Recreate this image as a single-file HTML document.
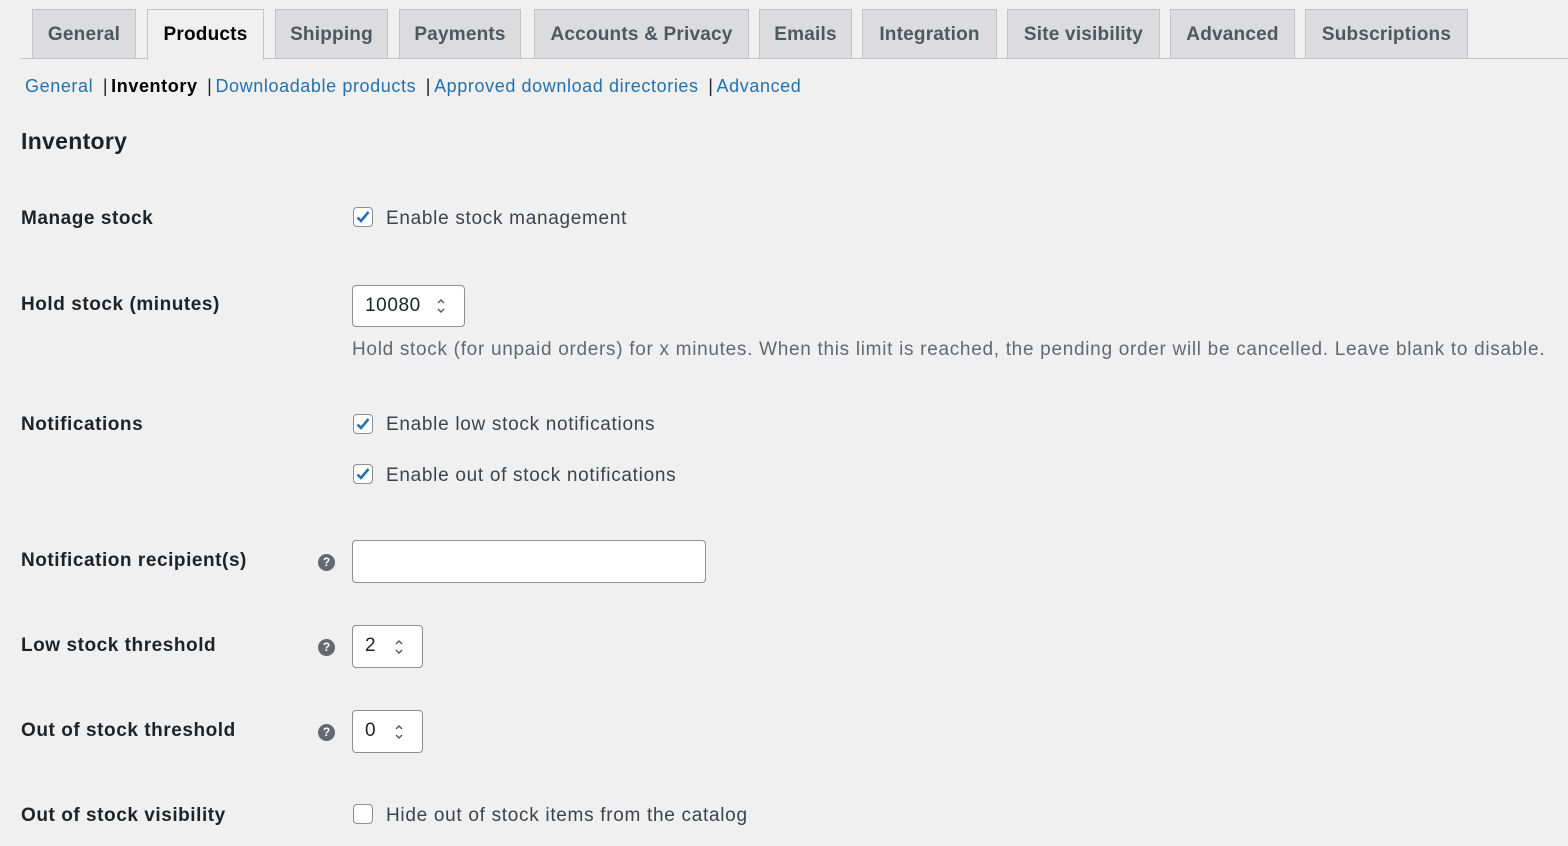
<!DOCTYPE html>
<html><head><style>
body{margin:0;width:1568px;height:846px;background:#f0f0f1;font-family:"Liberation Sans",sans-serif;color:#1d2327;position:relative;overflow:hidden}
.a{position:absolute;white-space:nowrap}
.tab{position:absolute;top:9px;height:49px;background:#dcdcde;border:1px solid #c3c4c7;border-bottom:none;box-sizing:border-box;font-size:19px;font-weight:bold;color:#50575e;text-align:center;line-height:50px;letter-spacing:0.2px}
.tab.on{background:#f0f0f1;color:#000;height:51px}
.line{position:absolute;left:20px;right:0;top:58px;border-top:1px solid #c3c4c7}
.sub{font-size:18px;top:76px;color:#2271b1;letter-spacing:0.6px}
.sub i{font-style:normal;color:#1d2327;margin:0 3px 0 4px}
.lbl{font-size:19px;font-weight:bold;color:#1d2327;letter-spacing:0.55px}
.txt{font-size:19px;color:#3c434a;letter-spacing:0.7px}
.cb{position:absolute;width:20px;height:20px;border:1px solid #8c8f94;border-radius:4px;background:#fff;box-sizing:border-box}
.inp{position:absolute;background:#fff;border:1px solid #8c8f94;border-radius:4px;box-sizing:border-box;font-size:19px;color:#1d2327;line-height:40px;padding-left:12px;letter-spacing:0.6px}
.help{position:absolute;width:17px;height:17px;border-radius:50%;background:#646970;color:#fff;font-size:12px;font-weight:bold;text-align:center;line-height:17px}
.spin{position:absolute}
</style></head><body>
<div class="line"></div>
<div class="tab" style="left:32px;width:104px">General</div>
<div class="tab on" style="left:147px;width:117px">Products</div>
<div class="tab" style="left:275px;width:113px">Shipping</div>
<div class="tab" style="left:399px;width:122px">Payments</div>
<div class="tab" style="left:534px;width:215px">Accounts &amp; Privacy</div>
<div class="tab" style="left:759px;width:93px">Emails</div>
<div class="tab" style="left:862px;width:135px">Integration</div>
<div class="tab" style="left:1007px;width:153px">Site visibility</div>
<div class="tab" style="left:1170px;width:125px">Advanced</div>
<div class="tab" style="left:1305px;width:163px">Subscriptions</div>

<div class="a sub" style="left:25px">General<i> |</i><b style="color:#000">Inventory</b><i> |</i>Downloadable products<i> |</i>Approved download directories<i> |</i>Advanced</div>

<div class="a" style="left:21px;top:128px;font-size:23px;font-weight:bold;letter-spacing:0.3px">Inventory</div>

<div class="a lbl" style="left:21px;top:208px">Manage stock</div>
<div class="cb" style="left:353px;top:207px"><svg width="18" height="18" viewBox="0 0 18 18" style="position:absolute;left:0;top:0"><path d="M3.5 9.5l3.5 3.5 7.5-9" stroke="#2271b1" stroke-width="2.6" fill="none"/></svg></div>
<div class="a txt" style="left:386px;top:208px">Enable stock management</div>

<div class="a lbl" style="left:21px;top:294px">Hold stock (minutes)</div>
<div class="inp" style="left:352px;top:285px;width:113px;height:42px">10080</div>
<svg class="spin" style="left:436px;top:298px" width="10" height="16" viewBox="0 0 10 16"><path d="M2 5l3-3 3 3M2 11l3 3 3-3" stroke="#50575e" stroke-width="1.4" fill="none"/></svg>
<div class="a txt" style="left:352px;top:339px;color:#646970">Hold stock (for unpaid orders) for x minutes. When this limit is reached, the pending order will be cancelled. Leave blank to disable.</div>

<div class="a lbl" style="left:21px;top:414px">Notifications</div>
<div class="cb" style="left:353px;top:414px"><svg width="18" height="18" viewBox="0 0 18 18" style="position:absolute;left:0;top:0"><path d="M3.5 9.5l3.5 3.5 7.5-9" stroke="#2271b1" stroke-width="2.6" fill="none"/></svg></div>
<div class="a txt" style="left:386px;top:414px">Enable low stock notifications</div>
<div class="cb" style="left:353px;top:464px"><svg width="18" height="18" viewBox="0 0 18 18" style="position:absolute;left:0;top:0"><path d="M3.5 9.5l3.5 3.5 7.5-9" stroke="#2271b1" stroke-width="2.6" fill="none"/></svg></div>
<div class="a txt" style="left:386px;top:465px">Enable out of stock notifications</div>

<div class="a lbl" style="left:21px;top:550px">Notification recipient(s)</div>
<div class="help" style="left:318px;top:554px">?</div>
<div class="inp" style="left:352px;top:540px;width:354px;height:43px"></div>

<div class="a lbl" style="left:21px;top:635px">Low stock threshold</div>
<div class="help" style="left:318px;top:639px">?</div>
<div class="inp" style="left:352px;top:625px;width:71px;height:43px">2</div>
<svg class="spin" style="left:394px;top:639px" width="10" height="16" viewBox="0 0 10 16"><path d="M2 5l3-3 3 3M2 11l3 3 3-3" stroke="#50575e" stroke-width="1.4" fill="none"/></svg>

<div class="a lbl" style="left:21px;top:720px">Out of stock threshold</div>
<div class="help" style="left:318px;top:724px">?</div>
<div class="inp" style="left:352px;top:710px;width:71px;height:43px">0</div>
<svg class="spin" style="left:394px;top:724px" width="10" height="16" viewBox="0 0 10 16"><path d="M2 5l3-3 3 3M2 11l3 3 3-3" stroke="#50575e" stroke-width="1.4" fill="none"/></svg>

<div class="a lbl" style="left:21px;top:805px">Out of stock visibility</div>
<div class="cb" style="left:353px;top:804px"></div>
<div class="a txt" style="left:386px;top:805px">Hide out of stock items from the catalog</div>
</body></html>
